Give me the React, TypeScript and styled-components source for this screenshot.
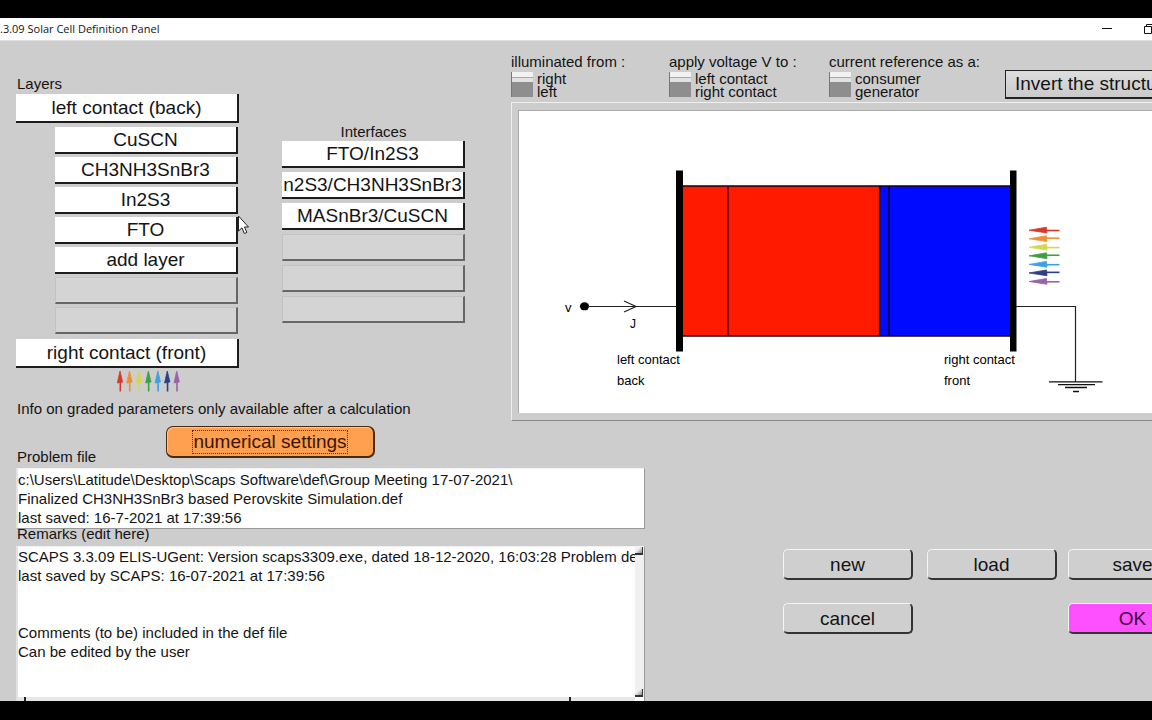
import React, { useState } from "react";
import styled, { createGlobalStyle, css } from "styled-components";

const GlobalStyle = createGlobalStyle`
  *, *::before, *::after { box-sizing: border-box; }
  body {
    margin: 0;
    background: #000;
    color: #141414;
    font-family: "Liberation Sans", Arial, sans-serif;
    font-size: 15px;
    line-height: 19px;
    overflow: hidden;
  }
  button, input, textarea { font: inherit; color: inherit; margin: 0; }
`;

const Screen = styled.div`
  height: 100vh;
  display: flex;
  flex-direction: column;
  padding: 18px 0 19px;
  overflow: hidden;
`;

const TitleBar = styled.header`
  flex: none;
  height: 22px;
  display: flex;
  align-items: center;
  justify-content: space-between;
  background: #fff;
  overflow: hidden;
`;

const Title = styled.h1`
  margin: 0;
  font: 400 11px/22px "Open Sans", "Noto Sans", sans-serif;
  white-space: nowrap;
`;

const WindowControls = styled.div`
  display: flex;
  gap: 31px;
  margin-right: -3px;
`;

const WindowButton = styled.button`
  display: flex;
  padding: 0;
  border: 0;
  background: none;
`;

const Panel = styled.main`
  flex: 1;
  min-height: 0;
  display: flex;
  flex-direction: column;
  background: #cdcdcd;
  border-top: 1px solid #e0e0e0;
  overflow: hidden;
`;

const UpperRow = styled.div`
  flex: none;
  display: flex;
  height: 385px;
  padding-left: 16px;
`;

const StructureSide = styled.section`
  flex: none;
  width: 495px;
  padding-top: 33px;
`;

const Lists = styled.div`
  display: flex;
  gap: 43px;
`;

const LayerColumn = styled.div`
  width: 223px;
  display: flex;
  flex-direction: column;
`;

const LayerStack = styled.div`
  display: flex;
  flex-direction: column;
  gap: 3px;
  margin: 4px 1px 5px 39px;
`;

const InterfaceColumn = styled.div`
  width: 183px;
  padding-top: 48px;
  text-align: center;
`;

const InterfaceStack = styled.div`
  display: flex;
  flex-direction: column;
  gap: 4px;
`;

const Caption = styled.h2`
  margin: 0;
  font-size: 15px;
  font-weight: 400;
  line-height: 19px;
  height: 19px;
`;

const LayersCaption = styled(Caption)`
  height: 20px;
  padding-left: 1px;
`;

const FlatButton = styled.button<{ $tall?: boolean }>`
  height: ${(p) => (p.$tall ? 29 : 27)}px;
  padding: 0;
  border: 1px solid #fff;
  border-width: 0 2px 2px 0;
  border-color: #fff #1c1c1c #1c1c1c #fff;
  background: #fff;
  font-size: 19px;
  line-height: 25px;
  white-space: nowrap;
  overflow: hidden;
  &:disabled {
    background: #d4d4d4;
    border-width: 1px 2px 2px 1px;
    border-color: #c2c2c2 #666 #666 #c2c2c2;
  }
`;

const LightBelow = styled.div`
  display: flex;
  padding: 2px 0 8px 101px;
`;

const Note = styled.p`
  margin: 0;
  line-height: 18px;
  padding-left: 1px;
`;

const DiagramSide = styled.section`
  flex: 1;
  min-width: 0;
  padding-top: 12px;
`;

const Options = styled.div`
  display: grid;
  grid-template-columns: 158px 160px 176px max-content;
  height: 49px;
`;

const OptionGroup = styled.div``;

const OptionTitle = styled.div`
  line-height: 18px;
  height: 19px;
`;

const OptionLabel = styled.label`
  display: flex;
  gap: 4px;
  line-height: 13px;
`;

const Toggle = styled.input`
  appearance: none;
  width: 22px;
  height: 25px;
  border-left: 1px solid #777;
  background: linear-gradient(#f2f2f2 0 5px, #a8a8a8 5px 6px, #e2e2e2 6px 10px, #8e8e8e 10px);
  &:checked {
    background: linear-gradient(#8e8e8e 0 15px, #e2e2e2 15px 19px, #a8a8a8 19px 20px, #f2f2f2 20px);
  }
`;

const OptionNames = styled.span`
  display: flex;
  flex-direction: column;
`;

const InvertButton = styled.button`
  align-self: start;
  height: 29px;
  margin-top: 17px;
  padding: 0 9px;
  border: 1px solid #222;
  border-bottom-width: 2px;
  background: linear-gradient(#dedede, #cacaca);
  font-size: 19px;
  line-height: 24px;
  white-space: nowrap;
`;

const DiagramFrame = styled.div`
  margin-right: -20px;
  padding: 7px 6px;
  border: 1px solid #efefef;
  border-bottom-color: #888;
`;

const Diagram = styled.svg`
  display: block;
  width: 100%;
  height: 303px;
  background: #fff;
  border: 1px solid #aaa;
  border-width: 1px 0 0 1px;
  font-size: 13px;
`;

const LowerRow = styled.div`
  flex: 1;
  min-height: 0;
  display: flex;
  padding-left: 16px;
`;

const FileSide = styled.section`
  flex: none;
  width: 629px;
  display: flex;
  flex-direction: column;
`;

const SettingsRow = styled.div`
  flex: none;
  display: grid;
  grid-template-columns: 150px 209px;
  height: 42px;
`;

const FieldLabel = styled.label<{ $tucked?: boolean }>`
  padding: 0 0 2px 1px;
  line-height: 18px;
  align-self: end;
  ${(p) =>
    p.$tucked &&
    css`
      flex: none;
      align-self: start;
      height: 17px;
      line-height: 9px;
    `}
`;

const SettingsButton = styled.button`
  height: 32px;
  display: flex;
  align-items: center;
  justify-content: center;
  padding: 1px 0 0;
  border: 1px solid #4a2a10;
  border-width: 1px 2px 2px 1px;
  border-radius: 7px;
  background: #ff9f50;
  box-shadow: inset 1px 1px 0 #ffc48c;
  font-size: 19px;
  color: #3a1604;
`;

const FocusMark = styled.span`
  line-height: 22px;
  border: 1px dotted #5a2a0a;
`;

const TextField = styled.textarea`
  display: block;
  width: 100%;
  padding: 1px 0 0;
  border: 1px solid #eee;
  border-color: #f2f2f2 #999 #999 #e2e2e2;
  border-width: 1px 1px 1px 2px;
  border-radius: 0;
  background: #fff;
  line-height: 19px;
  resize: none;
  overflow: hidden;
  white-space: pre;
  outline: none;
`;

const FileField = styled(TextField)`
  flex: none;
  position: relative;
  height: 61px;
`;

const RemarksBox = styled.div`
  flex: 1;
  min-height: 0;
  display: grid;
  grid-template-columns: 1fr 9px;
  grid-template-rows: 1fr 4px;
  background: #fff;
  border: 1px solid #eee;
  border-color: #f2f2f2 #999 #fff #e2e2e2;
  border-width: 1px 1px 0 2px;
`;

const RemarksField = styled(TextField)`
  height: 100%;
  padding: 0;
  border: 0;
`;

const VerticalTrack = styled.div`
  display: flex;
  flex-direction: column;
  justify-content: space-between;
  background: #f0f0f0;
`;

const Corner = styled.span`
  height: 8px;
  margin-right: 1px;
  background: linear-gradient(135deg, #f0f0f0 40%, #888);
  border: solid #333;
  border-width: 0 1px 2px 0;
`;

const HorizontalTrack = styled.div`
  display: flex;
  justify-content: space-between;
  padding: 0 64px 0 6px;
  background: #e6e6e6;
`;

const Tick = styled.span`
  width: 2px;
  background: #222;
`;

const ActionGrid = styled.div`
  display: grid;
  grid-template-columns: 144px 141px 129px;
  grid-auto-rows: 54px;
  align-content: start;
  margin-left: 138px;
  padding-top: 123px;
`;

const ActionButton = styled.button<{ $accent?: boolean }>`
  width: 130px;
  height: 31px;
  padding: 1px 0 0;
  border: 1px solid #eee;
  border-width: 1px 2px 2px 1px;
  border-color: #f4f4f4 #333 #333 #f4f4f4;
  border-radius: 5px;
  background: ${(p) => (p.$accent ? "#ff50ff" : "#cfcfcf")};
  color: ${(p) => (p.$accent ? "#3c0a3c" : "#141414")};
  font-size: 19px;
  line-height: 24px;
  grid-column: ${(p) => (p.$accent ? 3 : "auto")};
`;

const Pointer = styled.svg`
  position: absolute;
  left: 238px;
  top: 215px;
  pointer-events: none;
`;

const lightColors = ["#d63a2c", "#ef8f35", "#d3d84c", "#3f9f45", "#3d9fe6", "#2c3f86", "#9b62a8"];
const layers = ["CuSCN", "CH3NH3SnBr3", "In2S3", "FTO", "add layer", "", ""];
const interfaces = ["FTO/In2S3", "n2S3/CH3NH3SnBr3", "MASnBr3/CuSCN", "", "", ""];

const problemFile = [
  "c:\\Users\\Latitude\\Desktop\\Scaps Software\\def\\Group Meeting 17-07-2021\\",
  "Finalized CH3NH3SnBr3 based Perovskite Simulation.def",
  "last saved: 16-7-2021 at 17:39:56",
].join("\n");

const initialRemarks = [
  "SCAPS 3.3.09 ELIS-UGent: Version scaps3309.exe, dated 18-12-2020, 16:03:28 Problem de",
  "last saved by SCAPS: 16-07-2021 at 17:39:56",
  "",
  "",
  "Comments (to be) included in the def file",
  "Can be edited by the user",
].join("\n");

function Switch({ id, title, first, second }: { id: string; title: string; first: string; second: string }) {
  return (
    <OptionGroup>
      <OptionTitle>{title}</OptionTitle>
      <OptionLabel htmlFor={id}>
        <Toggle id={id} type="checkbox" role="switch" />
        <OptionNames>
          <span>{first}</span>
          <span>{second}</span>
        </OptionNames>
      </OptionLabel>
    </OptionGroup>
  );
}

function CellDiagram() {
  return (
    <Diagram role="img" aria-label="Layer structure of the solar cell">
      <g transform="translate(-519 -111)">
        <rect x="683" y="186" width="196" height="150" fill="#ff1a00" />
        <rect x="879" y="186" width="131" height="150" fill="#000aff" />
        <path d="M683 186H1010M683 336H1010" stroke="#1a0010" strokeWidth="1.4" />
        <path d="M728 186V336" stroke="#500" strokeWidth="1.6" />
        <path d="M879.7 186V336M889 186V336" stroke="#000030" strokeWidth="1.6" />
        <rect x="676" y="170.5" width="7" height="181" />
        <rect x="1010" y="170.5" width="6.5" height="181" />
        <ellipse cx="584.5" cy="306.3" rx="4.6" ry="4" />
        <path d="M588 306.500H676M624 301L636 306.500L624 312" fill="none" stroke="#222" strokeWidth="1.2" />
        <path d="M1016 306.500H1075.500V382" fill="none" stroke="#222" strokeWidth="1.2" />
        <path d="M1049 381.800H1102.500M1058 384.600H1095M1065 387.500H1087M1073 391.500H1079" stroke="#111" strokeWidth="1.3" />
        <text x="565" y="312">v</text>
        <text x="630" y="328" fontSize="12">J</text>
        <text x="617" y="364">left contact</text>
        <text x="617" y="385">back</text>
        <text x="944" y="364">right contact</text>
        <text x="944" y="385">front</text>
        {lightColors.map((color, i) => (
          <g key={color} transform={`translate(1028 ${230 + i * 8.55})`} fill={color} stroke={color}>
            <path d={i % 2 ? "M18 -.4H31.500" : "M18 .5H31.500"} strokeWidth="1.6" />
            <path d="M1 .2L18.500 -2.800L19 3Z" strokeWidth=".8" />
          </g>
        ))}
      </g>
    </Diagram>
  );
}

export default function App() {
  const [remarks, setRemarks] = useState(initialRemarks);
  return (
    <>
      <GlobalStyle />
      <Screen>
        <TitleBar>
          <Title>.3.09 Solar Cell Definition Panel</Title>
          <WindowControls>
            <WindowButton aria-label="Minimize">
              <svg width="11" height="12" stroke="#111">
                <path d="M0 5.500H10" />
              </svg>
            </WindowButton>
            <WindowButton aria-label="Restore">
              <svg width="11" height="12" fill="none" stroke="#111">
                <path d="M.5 3.500H7.500V10.500H.5ZM2.500 3.500V1.500H10V9H7.500" />
              </svg>
            </WindowButton>
          </WindowControls>
        </TitleBar>
        <Panel>
          <UpperRow>
            <StructureSide>
              <Lists>
                <LayerColumn>
                  <LayersCaption>Layers</LayersCaption>
                  <FlatButton $tall>left contact (back)</FlatButton>
                  <LayerStack>
                    {layers.map((name, i) => (
                      <FlatButton key={i} disabled={!name}>{name}</FlatButton>
                    ))}
                  </LayerStack>
                  <FlatButton $tall>right contact (front)</FlatButton>
                </LayerColumn>
                <InterfaceColumn>
                  <Caption>Interfaces</Caption>
                  <InterfaceStack>
                    {interfaces.map((name, i) => (
                      <FlatButton key={i} disabled={!name}>{name}</FlatButton>
                    ))}
                  </InterfaceStack>
                </InterfaceColumn>
              </Lists>
              <LightBelow>
                <svg width="66" height="22" aria-hidden="true">
                  {lightColors.map((color, i) => (
                    <g key={color} transform={`translate(${3 + i * 9.45} 0)`} fill={color} stroke={color}>
                      <path d="M.3 12V21.500" strokeWidth="1.6" />
                      <path d="M0 1L2.700 12L-2.700 13Z" strokeWidth=".8" />
                    </g>
                  ))}
                </svg>
              </LightBelow>
              <Note>Info on graded parameters only available after a calculation</Note>
            </StructureSide>
            <DiagramSide>
              <Options>
                <Switch id="illumination" title="illuminated from :" first="right" second="left" />
                <Switch id="voltage" title="apply voltage V to :" first="left contact" second="right contact" />
                <Switch id="current" title="current reference as a:" first="consumer" second="generator" />
                <InvertButton>Invert the structure</InvertButton>
              </Options>
              <DiagramFrame>
                <CellDiagram />
              </DiagramFrame>
            </DiagramSide>
          </UpperRow>
          <LowerRow>
            <FileSide>
              <SettingsRow>
                <FieldLabel htmlFor="problem-file">Problem file</FieldLabel>
                <SettingsButton>
                  <FocusMark>numerical settings</FocusMark>
                </SettingsButton>
              </SettingsRow>
              <FileField id="problem-file" readOnly value={problemFile} />
              <FieldLabel $tucked htmlFor="remarks">Remarks (edit here)</FieldLabel>
              <RemarksBox>
                <RemarksField
                  id="remarks"
                  wrap="off"
                  spellCheck={false}
                  value={remarks}
                  onChange={(e) => setRemarks(e.target.value)}
                />
                <VerticalTrack>
                  <Corner />
                  <Corner />
                </VerticalTrack>
                <HorizontalTrack>
                  <Tick />
                  <Tick />
                </HorizontalTrack>
              </RemarksBox>
            </FileSide>
            <ActionGrid>
              <ActionButton>new</ActionButton>
              <ActionButton>load</ActionButton>
              <ActionButton>save</ActionButton>
              <ActionButton>cancel</ActionButton>
              <ActionButton $accent>OK</ActionButton>
            </ActionGrid>
          </LowerRow>
        </Panel>
      </Screen>
      <Pointer width="11" height="20" viewBox="0 0 11 20" aria-hidden="true">
        <path d="M.5 1V16L4 12.800L6.300 18.500L8.800 17.400L6.500 12H10.500Z" fill="#fff" stroke="#222" />
      </Pointer>
    </>
  );
}
